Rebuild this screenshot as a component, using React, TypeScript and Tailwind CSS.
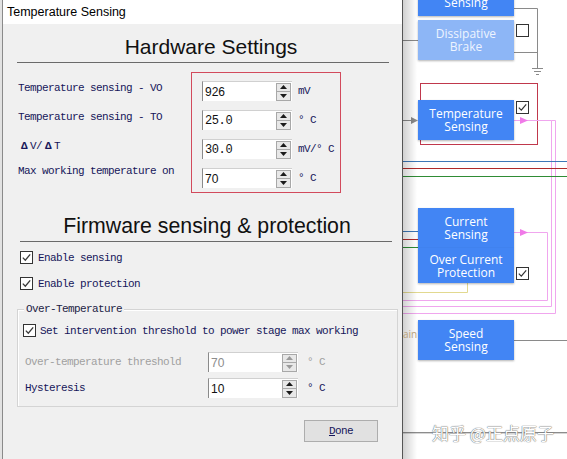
import React from "react";

const mono =
  "font-['Liberation_Mono','DejaVu_Sans_Mono',monospace] text-[11px] tracking-[-0.6px] leading-[12px]";

function Check({ checked = true }: { checked?: boolean }) {
  return (
    <div className="w-[13px] h-[13px] border border-[#333333] bg-white flex items-center justify-center shrink-0">
      {checked && (
        <svg width="11" height="11" viewBox="0 0 11 11">
          <path d="M1.8 5.6 L4.3 8.2 L9.2 2.4" fill="none" stroke="#3a3a3a" strokeWidth="1.3" />
        </svg>
      )}
    </div>
  );
}

function Spin({ value, monoVal = false, disabled = false }: { value: string; monoVal?: boolean; disabled?: boolean }) {
  const tri = disabled ? "#9a9a9a" : "#1a1a1a";
  return (
    <div className="w-[90px] h-[20px] bg-white border-l border-t border-l-[#8a8a8a] border-t-[#d0d0d0] flex items-center shrink-0">
      <div
        className={
          (monoVal
            ? "font-['Liberation_Mono',monospace] text-[12px] tracking-[-0.4px] "
            : "font-['Liberation_Sans',Arial,sans-serif] text-[12px] ") +
          (disabled ? "text-[#8c8c8c] " : "text-[#111111] ") +
          "flex-1 pl-[2px] leading-[14px]"
        }
      >
        {value}
      </div>
      <div className="w-[15px] h-[18px] mr-[1px] flex flex-col">
        <div className="h-[9px] border border-[#a8a8a8] bg-[#e8e8e8] flex items-center justify-center">
          <svg width="7" height="4" viewBox="0 0 7 4">
            <path d="M0 4 L3.5 0 L7 4 Z" fill={tri} />
          </svg>
        </div>
        <div className="h-[9px] border border-t-0 border-[#a8a8a8] bg-[#e8e8e8] flex items-center justify-center">
          <svg width="7" height="4" viewBox="0 0 7 4">
            <path d="M0 0 L7 0 L3.5 4 Z" fill={tri} />
          </svg>
        </div>
      </div>
    </div>
  );
}

function Node({ top, lines, light = false, h = 40 }: { top: number; lines: string[]; light?: boolean; h?: number }) {
  return (
    <div
      className={
        (light ? "bg-[#8db6f6] text-[#eef4ff] " : "bg-[#4285f4] text-white ") +
        "absolute left-[15px] w-[96px] flex flex-col items-center justify-center font-['Open_Sans',Lato,sans-serif] text-[12px] leading-[13px] shadow-[0_1px_2px_rgba(0,0,0,0.3)]"
      }
      style={{ top, height: h }}
    >
      {lines.map((l) => (
        <span key={l}>{l}</span>
      ))}
    </div>
  );
}

function SmallCheck({ top, checked }: { top: number; checked: boolean }) {
  return (
    <div
      className="absolute left-[113px] w-[13px] h-[13px] border border-[#333333] bg-white flex items-center justify-center"
      style={{ top }}
    >
      {checked && (
        <svg width="11" height="11" viewBox="0 0 11 11">
          <path d="M1.8 5.6 L4.3 8.2 L9.2 2.4" fill="none" stroke="#333" strokeWidth="1.2" />
        </svg>
      )}
    </div>
  );
}

function Delta() {
  return <span className="inline-block w-[12px] text-center font-bold">Δ</span>;
}

export default function App() {
  const navy = "text-[#16165a]";
  return (
    <div className="w-[567px] h-[459px] flex overflow-hidden bg-white">
      <div className="w-[2px] h-full bg-[#e2e2e2] shrink-0" />
      {/* Dialog */}
      <div className="w-[401px] h-full flex flex-col border-l border-l-[#8a8a8a] border-r border-r-[#555555] shrink-0 bg-[#f0f0f0]">
        <div className="h-[24px] bg-white flex items-center pl-[4px] font-['Liberation_Sans',Arial,sans-serif] text-[12.5px] text-black">
          Temperature Sensing
        </div>
        <div className="flex-1 bg-[#f0f0f0] pl-[14px] pr-[13px] pt-[11px]">
          <div className="border-b border-[#6a6a6a] pb-[3px]">
            <div className="text-center pl-[16px] font-['Liberation_Sans',Arial,sans-serif] text-[21px] leading-[24px] text-[#111]">
              Hardware Settings
            </div>
          </div>

          <div className="flex mt-[9px]">
            <div className={"w-[174px] pl-[1px] pt-[10px] flex flex-col " + mono + " " + navy}>
              <span>Temperature sensing - VO</span>
              <span className="mt-[17px]">Temperature sensing - TO</span>
              <span className="mt-[17px]">
                <Delta />V/<Delta />T
              </span>
              <span className="mt-[13px]">Max working temperature on</span>
            </div>
            <div className="w-[150px] h-[121px] border border-[#d24a5c] pl-[10px] pt-[8px] flex flex-col gap-[9px]">
              <div className="flex items-center">
                <Spin value="926" />
                <span className={"ml-[6px] " + mono + " " + navy}>mV</span>
              </div>
              <div className="flex items-center">
                <Spin value="25.0" monoVal />
                <span className={"ml-[6px] " + mono + " " + navy}>° C</span>
              </div>
              <div className="flex items-center">
                <Spin value="30.0" monoVal />
                <span className={"ml-[6px] " + mono + " " + navy}>mV/° C</span>
              </div>
              <div className="flex items-center">
                <Spin value="70" />
                <span className={"ml-[6px] " + mono + " " + navy}>° C</span>
              </div>
            </div>
          </div>

          <div className="mt-[21px] ml-[3px] -mr-[3px] border-b border-[#6a6a6a] pb-[3px]">
            <div className="text-center pl-[2px] font-['Liberation_Sans',Arial,sans-serif] text-[21.3px] leading-[24px] text-[#111]">
              Firmware sensing &amp; protection
            </div>
          </div>

          <div className="mt-[9px] ml-[3px] flex items-center gap-[5px]">
            <Check />
            <span className={mono + " " + navy}>Enable sensing</span>
          </div>
          <div className="mt-[13px] ml-[3px] flex items-center gap-[5px]">
            <Check />
            <span className={mono + " " + navy}>Enable protection</span>
          </div>

          <div className="relative mt-[19px] -mr-[9px] border border-[#d4d4d4] shadow-[inset_1px_1px_0_#ffffff] pl-[5px] pt-[14px] pb-[8px]">
            <span className={"absolute -top-[7px] left-[6px] px-[2px] bg-[#f0f0f0] " + mono + " text-[#222244]"}>
              Over-Temperature
            </span>
            <div className="flex items-center gap-[4px]">
              <Check />
              <span className={mono + " " + navy}>Set intervention threshold to power stage max working</span>
            </div>
            <div className="mt-[15px] flex items-center">
              <span className={"w-[185px] pl-[2px] " + mono + " text-[#a0a0a0]"}>Over-temperature threshold</span>
              <Spin value="70" disabled />
              <span className={"ml-[9px] " + mono + " text-[#a0a0a0]"}>° C</span>
            </div>
            <div className="mt-[6px] flex items-center">
              <span className={"w-[185px] pl-[2px] " + mono + " " + navy}>Hysteresis</span>
              <Spin value="10" />
              <span className={"ml-[9px] " + mono + " " + navy}>° C</span>
            </div>
          </div>

          <div className="mt-[13px] flex justify-end mr-[11px]">
            <div className={"w-[74px] h-[22px] bg-[#e1e1e1] border border-[#adadad] flex items-center justify-center " + mono + " " + navy}>
              <span>
                <span className="underline">D</span>one
              </span>
            </div>
          </div>
        </div>
      </div>

      {/* Diagram canvas */}
      <div className="relative w-[164px] h-full bg-white overflow-hidden shrink-0">
        <svg className="absolute left-0 top-0" width="164" height="459" viewBox="0 0 164 459">
          <path d="M111 8.5 H134.5 V68 M111 52.5 H134.5" fill="none" stroke="#8a8a8a" strokeWidth="1" />
          <path d="M129 68.5 H140 M131 71.5 H138 M133 74.5 H136" stroke="#8a8a8a" strokeWidth="1" />
          <path d="M0 40.5 H15" stroke="#8a8a8a" strokeWidth="1" />
          <rect x="17.5" y="83.5" width="117" height="61" fill="none" stroke="#c0384c" strokeWidth="1" />
          <path d="M0 120.5 H9" stroke="#8a8a8a" strokeWidth="1" />
          <path d="M8 117 L15 120.5 L8 124 Z" fill="#8a8a8a" />
          <g stroke="#f0a6ee" strokeWidth="1" fill="none">
            <path d="M111 120.5 H148.5 V306.5 H0" />
            <path d="M148.5 120.5 H152.5 V313.5 H0" />
            <path d="M111 232.5 H144.5 V300.5 H0" />
          </g>
          <path d="M117 117 L125 120.5 L117 124 Z" fill="#f07ae8" />
          <path d="M117 229 L125 232.5 L117 236 Z" fill="#f07ae8" />
          <path d="M0 161.5 H164 M0 231.5 H15" stroke="#3d78b8" strokeWidth="1" />
          <path d="M0 168.5 H164 M0 239.5 H15" stroke="#b02a2a" strokeWidth="1" />
          <path d="M0 176.5 H164 M0 247.5 H15" stroke="#2f8c35" strokeWidth="1" />
          <path d="M64.5 283 V292.5 H0" fill="none" stroke="#e2d98f" strokeWidth="1" />
          <path d="M111 340.5 H164" stroke="#8a8a8a" strokeWidth="1" />
          <path d="M0 432.5 H164" stroke="#8c8c8c" strokeWidth="1" />
          <path d="M0 433.5 H164" stroke="#d6d6d6" strokeWidth="1" />
        </svg>

        <div className="absolute left-0 top-0 w-[14px] h-full bg-gradient-to-r from-[rgba(0,0,0,0.18)] to-transparent" />

        <Node top={-24} lines={["Voltage", "Sensing"]} />
        <Node top={20} lines={["Dissipative", "Brake"]} light />
        <SmallCheck top={24} checked={false} />
        <Node top={100} lines={["Temperature", "Sensing"]} />
        <SmallCheck top={101} checked />
        <Node top={208} lines={["Current", "Sensing"]} />
        <Node top={248} h={35} lines={["Over Current", "Protection"]} />
        <SmallCheck top={267} checked />
        <Node top={320} lines={["Speed", "Sensing"]} />

        <span className="absolute left-0 top-[328px] font-['Open_Sans',sans-serif] text-[10px] leading-[12px] text-[#b9a27a]">ain</span>

        <span className="absolute left-[29px] top-[421px] font-['Noto_Sans_CJK_SC',sans-serif] text-[17px] leading-[24px] text-white [text-shadow:0_0_1px_#666,0_0_1px_#666]">
          知乎 @正点原子
        </span>
      </div>
    </div>
  );
}
